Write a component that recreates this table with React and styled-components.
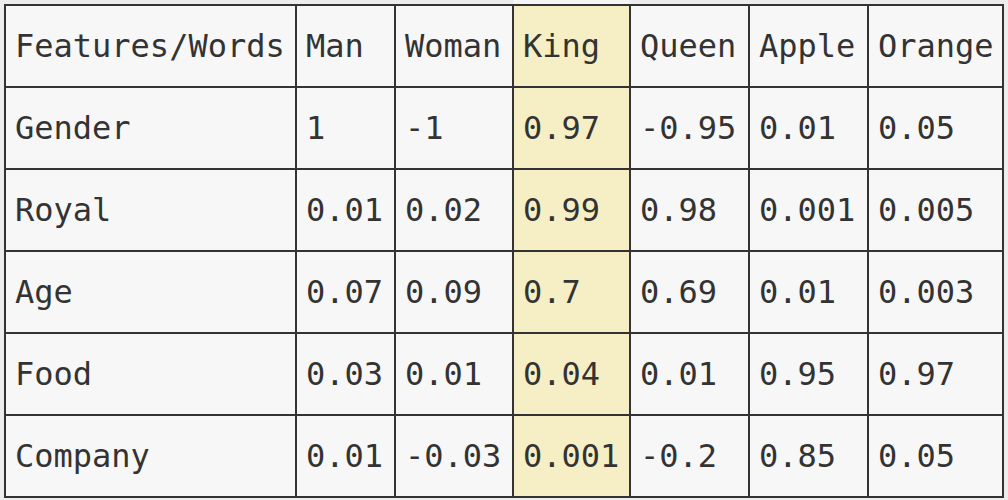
import styled, { createGlobalStyle } from 'styled-components';

const GlobalStyle = createGlobalStyle`
  html, body {
    margin: 0;
    padding: 0;
    background: #ededed;
  }
`;

const columns = ['Features/Words', 'Man', 'Woman', 'King', 'Queen', 'Apple', 'Orange'];
const widths = [291, 99, 118, 117, 119, 119, 135];
const highlight = 3;

const rows = [
  ['Gender', '1', '-1', '0.97', '-0.95', '0.01', '0.05'],
  ['Royal', '0.01', '0.02', '0.99', '0.98', '0.001', '0.005'],
  ['Age', '0.07', '0.09', '0.7', '0.69', '0.01', '0.003'],
  ['Food', '0.03', '0.01', '0.04', '0.01', '0.95', '0.97'],
  ['Company', '0.01', '-0.03', '0.001', '-0.2', '0.85', '0.05'],
];

export default function App() {
  return (
    <>
      <GlobalStyle />
      <Wrapper>
        <Table>
          <colgroup>
            {widths.map((w, i) => (
              <col key={i} style={{ width: w }} />
            ))}
          </colgroup>
          <thead>
            <tr>
              {columns.map((c, i) => (
                <HeadCell key={c} $active={i === highlight}>
                  {c}
                </HeadCell>
              ))}
            </tr>
          </thead>
          <tbody>
            {rows.map((r) => (
              <tr key={r[0]}>
                {r.map((v, i) => (
                  <Cell key={i} $active={i === highlight}>
                    {v}
                  </Cell>
                ))}
              </tr>
            ))}
          </tbody>
        </Table>
      </Wrapper>
    </>
  );
}

const Wrapper = styled.div`
  padding: 4px;
`;

const Table = styled.table`
  border-collapse: collapse;
  table-layout: fixed;
  width: 1000px;
  background: #f7f7f7;
  border: 2px solid #333;
  font-family: 'DejaVu Sans Mono', 'Liberation Mono', monospace;
  font-size: 32px;
  color: #333;
`;

const Cell = styled.td`
  position: relative;
  height: 80px;
  padding: 0 0 0 9px;
  border: 2px solid #333;
  text-align: left;
  vertical-align: middle;
  font-weight: normal;
  white-space: nowrap;
  overflow: visible;
  background: ${(p) => (p.$active ? '#f6efc5' : 'transparent')};
`;

const HeadCell = styled(Cell).attrs({ as: 'th' })`
  &::before {
    content: '';
    display: ${(p) => (p.$active ? 'block' : 'none')};
    position: absolute;
    left: -1px;
    right: -1px;
    top: -6px;
    height: 4px;
    background: #f5f5f5;
  }
`;
